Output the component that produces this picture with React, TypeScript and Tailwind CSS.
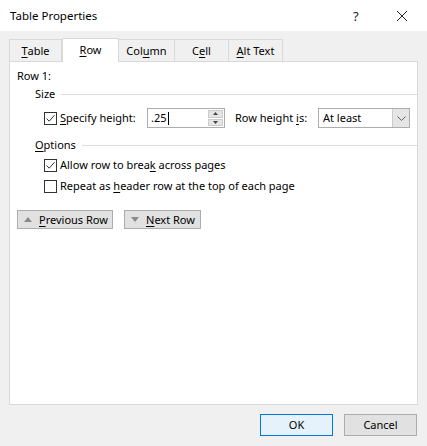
import React from 'react';

const font = { fontFamily: '"Segoe UI", "Noto Sans", "Liberation Sans", sans-serif' };

function U({ children }: { children: React.ReactNode }) {
  return <span className="underline underline-offset-2">{children}</span>;
}

function Check({ checked }: { checked?: boolean }) {
  return (
    <span className="w-[13px] h-[13px] border border-[#333333] bg-white flex items-center justify-center shrink-0">
      {checked && (
        <svg width="11" height="11" viewBox="0 0 11 11">
          <polyline points="1.5,5.5 4.2,8.2 9.5,2.2" fill="none" stroke="#333333" strokeWidth="1" />
        </svg>
      )}
    </span>
  );
}

function Group({ children }: { children: React.ReactNode }) {
  return (
    <div className="flex items-center h-[16px] ml-[18px]">
      <span>{children}</span>
      <span className="flex-1 h-px bg-[#dcdcdc] ml-[6px]" />
    </div>
  );
}

function Tab({ children, active, w }: { children: React.ReactNode; active?: boolean; w: string }) {
  return active ? (
    <div className={`${w} h-[24px] bg-white border border-b-0 border-[#d9d9d9] -mb-px flex items-center justify-center pb-[2px] relative z-10`}>
      {children}
    </div>
  ) : (
    <div className={`${w} h-[22px] bg-[#f0f0f0] border border-b-0 border-[#d9d9d9] -ml-px first:ml-0 flex items-center justify-center`}>
      {children}
    </div>
  );
}

export default function App() {
  return (
    <div className="w-[427px] h-[446px] bg-[#f0f0f0] flex flex-col text-[11px] leading-[16px] text-black whitespace-nowrap" style={font}>
      {/* Title bar */}
      <div className="h-[31px] bg-white flex items-center pl-[10px] shrink-0">
        <span className="flex-1 text-[11.5px]">Table Properties</span>
        <span className="w-[10px] text-[13px] mr-[33px] text-[#222]">?</span>
        <svg width="12" height="12" viewBox="0 0 12 12" className="mr-[19px]">
          <path d="M1 1 L11 11 M11 1 L1 11" stroke="#222" strokeWidth="1" />
        </svg>
      </div>

      {/* Tabs */}
      <div className="flex items-end pl-[9px] mt-[8px] h-[22px]">
        <Tab w="w-[53px]"><U>T</U>able</Tab>
        <Tab w="w-[57px]" active><U>R</U>ow</Tab>
        <Tab w="w-[57px]">Col<U>u</U>mn</Tab>
        <Tab w="w-[55px]">C<U>e</U>ll</Tab>
        <Tab w="w-[55px]"><U>A</U>lt Text</Tab>
      </div>

      {/* Panel */}
      <div className="mx-[9px] h-[344px] bg-white border border-[#d9d9d9] pt-[6px] pl-[7px] shrink-0">
        <div>Row 1:</div>
        <div className="mt-[2px]">
          <Group>Size</Group>
        </div>

        <div className="flex items-center h-[20px] mt-[6px] ml-[27px]">
          <Check checked />
          <span className="ml-[3px] w-[87px]"><U>S</U>pecify height:</span>
          <div className="w-[78px] h-[20px] border border-[#adadad] flex items-center">
            <span className="flex-1 pl-[3px] flex items-center">
              .25<span className="w-px h-[13px] bg-black ml-px" />
            </span>
            <div className="flex flex-col w-[15px] h-[16px] mr-[1px] gap-px">
              <div className="flex-1 bg-[#e5e5e5] border border-[#cccccc] flex items-center justify-center">
                <svg width="5" height="3" viewBox="0 0 5 3"><path d="M0 3 L2.5 0 L5 3 Z" fill="#444" /></svg>
              </div>
              <div className="flex-1 bg-[#e5e5e5] border border-[#cccccc] flex items-center justify-center">
                <svg width="5" height="3" viewBox="0 0 5 3"><path d="M0 0 L2.5 3 L5 0 Z" fill="#444" /></svg>
              </div>
            </div>
          </div>
          <span className="ml-[10px] w-[83px]">Row height <U>i</U>s:</span>
          <div className="w-[92px] h-[20px] border border-[#adadad] flex items-center">
            <span className="flex-1 pl-[4px]">At least</span>
            <div className="w-[17px] h-[18px] bg-[#e5e5e5] border-l border-[#cccccc] flex items-center justify-center">
              <svg width="9" height="5" viewBox="0 0 9 5"><path d="M0.5 0.5 L4.5 4.5 L8.5 0.5" fill="none" stroke="#606060" strokeWidth="1" /></svg>
            </div>
          </div>
        </div>

        <div className="mt-[9px]">
          <Group><U>O</U>ptions</Group>
        </div>

        <div className="flex items-center h-[16px] mt-[4px] ml-[27px]">
          <Check checked />
          <span className="ml-[3px]">Allow row to brea<U>k</U> across pages</span>
        </div>
        <div className="flex items-center h-[16px] mt-[5px] ml-[27px]">
          <Check />
          <span className="ml-[3px]">Repeat as <U>h</U>eader row at the top of each page</span>
        </div>

        <div className="flex items-center gap-[11px] mt-[16px]">
          <button className="w-[96px] h-[19px] bg-[#e1e1e1] border border-[#adadad] flex items-center pl-[6px]">
            <svg width="8" height="5" viewBox="0 0 8 5"><path d="M0 5 L4 0 L8 5 Z" fill="#8a8a8a" /></svg>
            <span className="ml-[7px]"><U>P</U>revious Row</span>
          </button>
          <button className="w-[77px] h-[19px] bg-[#e1e1e1] border border-[#adadad] flex items-center pl-[6px]">
            <svg width="8" height="5" viewBox="0 0 8 5"><path d="M0 0 L4 5 L8 0 Z" fill="#8a8a8a" /></svg>
            <span className="ml-[7px]"><U>N</U>ext Row</span>
          </button>
        </div>
      </div>

      {/* Bottom buttons */}
      <div className="flex justify-end gap-[11px] pr-[10px] mt-[9px]">
        <button className="w-[73px] h-[22px] bg-[#e5f1fb] border border-[#0078d7] flex items-center justify-center">OK</button>
        <button className="w-[73px] h-[22px] bg-[#e1e1e1] border border-[#adadad] flex items-center justify-center">Cancel</button>
      </div>
    </div>
  );
}
